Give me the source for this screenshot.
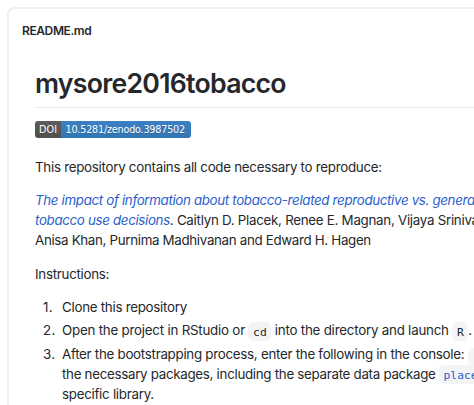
<main class="readme">
  <div class="filename">README.md</div>
  <article>
    <h1>mysore2016tobacco</h1>
    <div class="badge"><span class="label">DOI</span><span class="value">10.5281/zenodo.3987502</span></div>
    <p class="intro">This repository contains all code necessary to reproduce:</p>
    <p>
      <a class="title" href="#paper">The impact of information about tobacco-related reproductive vs. genera</a><br />
      <a class="title-end" href="#paper">tobacco use decisions</a><span class="authors">. Caitlyn D. Placek, Renee E. Magnan, Vijaya Sriniva</span><br />
      <span class="authors-end">Anisa Khan, Purnima Madhivanan and Edward H. Hagen</span>
    </p>
    <p>Instructions:</p>
    <ol>
      <li><b>1.</b><div>Clone this repository</div></li>
      <li><b>2.</b><div class="open">Open the project in RStudio or <code>cd</code> into the directory and launch <code>R</code>.</div></li>
      <li><b>3.</b><div>After the bootstrapping process, enter the following in the console: <code class="command"></code><br /><span class="packages">the necessary packages, including the separate data package <code class="link">place</code></span><br />specific library.</div></li>
    </ol>
  </article>
</main>

<style>
  :global(body) { background: #fff; overflow: hidden; }
  .readme {
    box-sizing: border-box;
    width: 467px;
    height: 398px;
    margin: 7px 0 0 7px;
    border: 2px solid #eeeff0;
    border-right: 0;
    border-bottom: 0;
    border-radius: 7px 0 0 0;
    overflow: hidden;
    color: #24272b;
    font: 13.33px/20px Inter, "Liberation Sans", sans-serif;
    letter-spacing: -0.27px;
    white-space: nowrap;
  }
  .filename { padding: 12px 0 0 13px; font-size: 12px; font-weight: 600; letter-spacing: -0.4px; }
  article { padding: 25px 0 0 26px; }
  h1 {
    margin: 0;
    height: 42px;
    border-bottom: 1px solid #e9ebed;
    font-size: 26.67px;
    font-weight: 600;
    line-height: 35px;
    box-sizing: border-box;
    letter-spacing: -0.73px;
  }
  .badge {
    display: flex;
    width: 155.5px;
    height: 17px;
    margin-top: 13px;
    overflow: hidden;
    border-radius: 3px;
    color: #fff;
    font: 9.6px/17px "DejaVu Sans", sans-serif;
    letter-spacing: -0.18px;
    text-shadow: 0 1px 0 #0103;
  }
  .label { box-sizing: border-box; width: 26px; padding-left: 4px; background: linear-gradient(#5c5c5c, #505050); letter-spacing: 0.2px; }
  .value { flex: 1; padding-left: 4.5px; background: linear-gradient(#3b80c3, #3376b5); }
  p { margin: 0 0 13.33px; }
  .intro { margin-top: 19px; }
  a, .link { color: #2a60cc; text-decoration: none; }
  a { font-style: italic; }
  .title { letter-spacing: -0.335px; }
  .title-end { letter-spacing: -0.33px; }
  .authors { letter-spacing: -0.27px; }
  .authors-end { letter-spacing: -0.32px; }
  .open { letter-spacing: -0.22px; }
  .packages { letter-spacing: -0.29px; }
  ol { margin: 0; padding: 0; list-style: none; }
  li { display: flex; margin-bottom: 3.4px; }
  b { flex: none; box-sizing: border-box; width: 27px; padding-left: 8px; font-weight: 400; letter-spacing: 0.3px; }
  code {
    padding: 2.7px 4.6px;
    border-radius: 5px;
    background: #f3f4f5;
    font: 11.33px "DejaVu Sans Mono", monospace;
    letter-spacing: 0;
  }
  .command { display: inline-block; width: 20px; height: 13px; vertical-align: -5px; margin: -3px 0; }
</style>
